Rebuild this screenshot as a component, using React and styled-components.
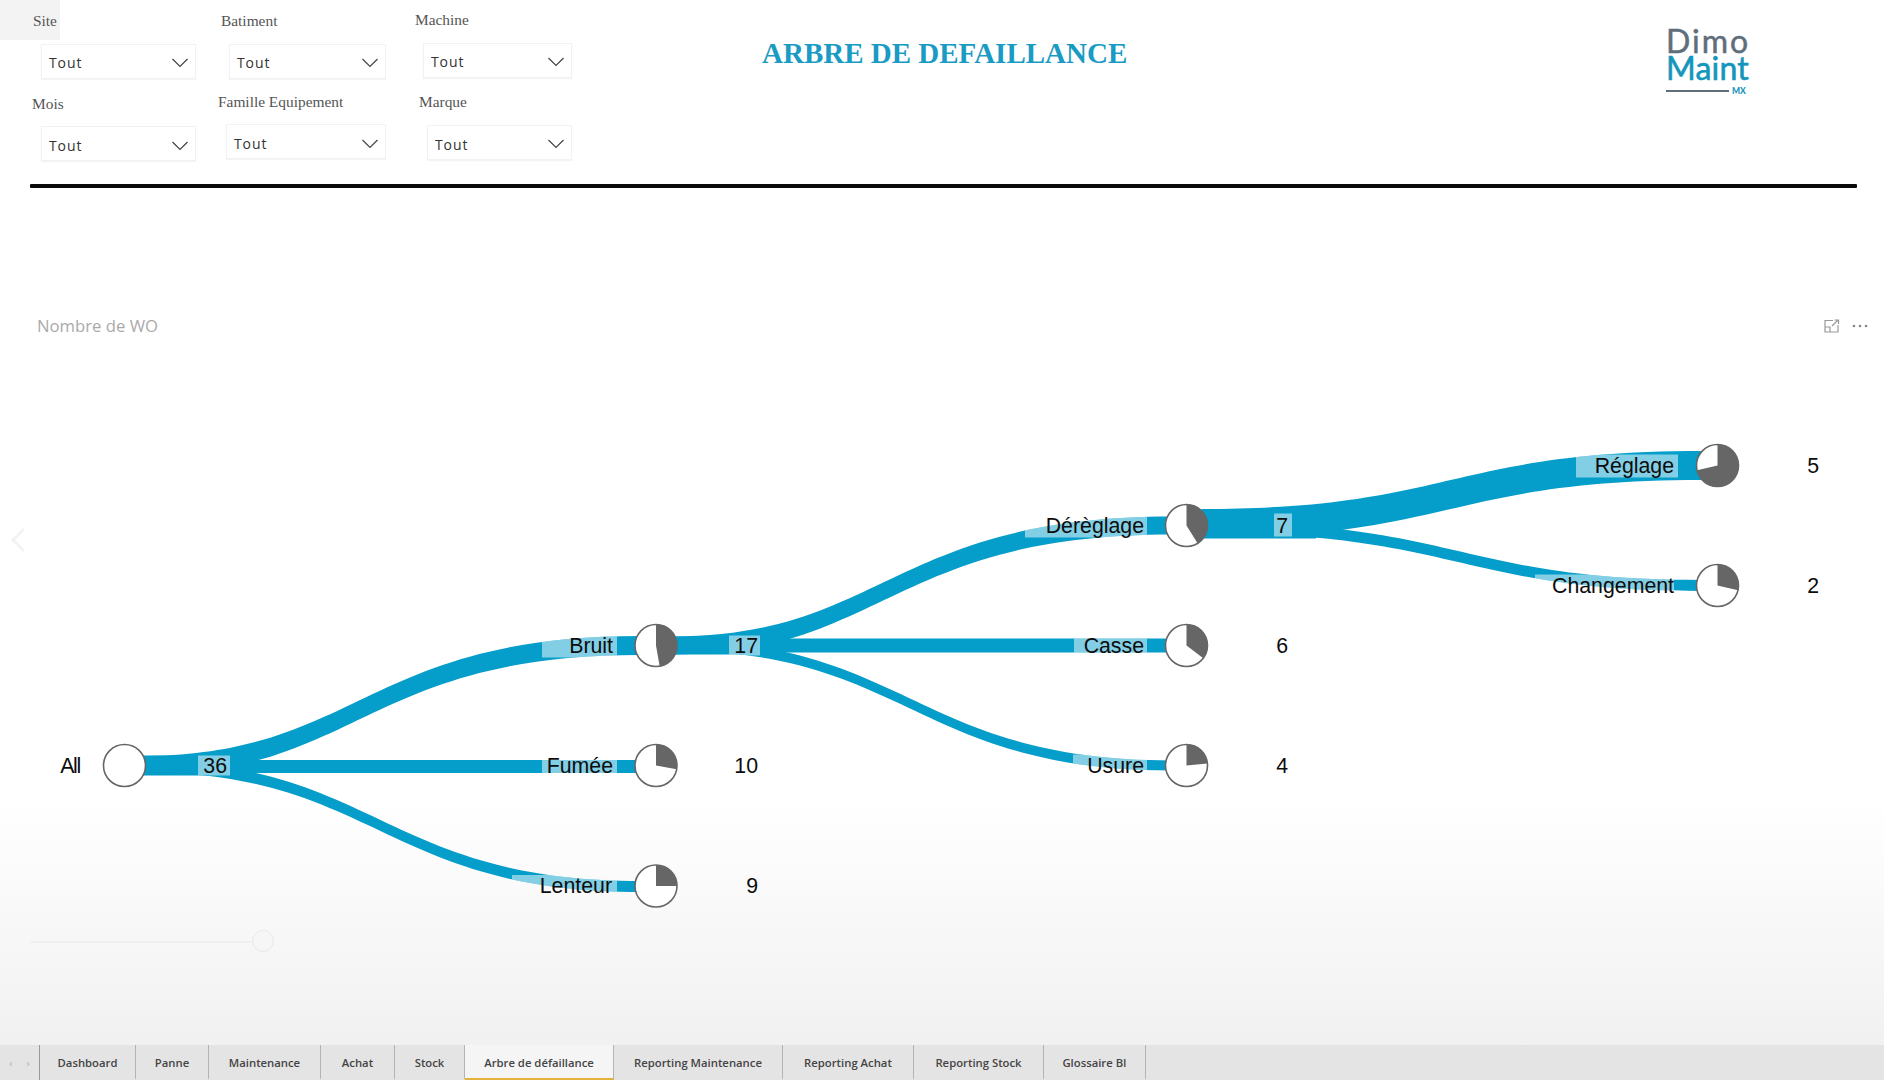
import React from "react";
import styled, { createGlobalStyle } from "styled-components";

const Global = createGlobalStyle`
  html, body { margin: 0; padding: 0; background: #fff; }
  body { font-family: "Open Sans", sans-serif; overflow: hidden; }
`;

const Page = styled.div`
  width: 1884px;
  height: 1080px;
  display: flex;
  flex-direction: column;
  background: linear-gradient(180deg, #fff 0, #fff 800px, #f1f1f1 1045px);
  overflow: hidden;
`;

const Header = styled.header`
  position: relative;
  height: 184px;
  display: flex;
  flex-shrink: 0;
  background: #fff;
  &::before {
    content: "";
    position: absolute;
    left: 0;
    top: 0;
    width: 60px;
    height: 40px;
    background: #f3f3f3;
  }
`;

const Filters = styled.div`
  position: relative;
  width: 740px;
  flex-shrink: 0;
`;

const FilterRow = styled.div`
  display: flex;
  align-items: flex-start;
  height: ${(p) => p.$height}px;
  padding-left: ${(p) => p.$left}px;
`;

const Filter = styled.div`
  width: ${(p) => p.$width}px;
  padding-top: ${(p) => p.$top}px;
  display: flex;
  flex-direction: column;
`;

const FilterLabel = styled.label`
  font-family: "Liberation Serif", serif;
  font-size: 15.4px;
  line-height: 16px;
  height: 16px;
  color: #555;
  white-space: nowrap;
  margin-bottom: ${(p) => p.$gap}px;
`;

const Select = styled.div`
  margin-left: ${(p) => p.$inset}px;
  width: ${(p) => p.$width}px;
  height: 35px;
  box-sizing: border-box;
  padding: ${(p) => p.$drop}px 6px 0 7px;
  display: flex;
  align-items: center;
  justify-content: space-between;
  border: 1px solid #f2f2f2;
  box-shadow: 0 1px 1px #f4f4f4;
  background: #fff;
  font-family: "Open Sans", sans-serif;
  font-size: 14px;
  letter-spacing: 0.9px;
  color: #333;
`;

const Chevron = () => (
  <svg width="18" height="10" viewBox="0 0 18 10" fill="none" stroke="#444" strokeWidth="1.2">
    <path d="M1.5 1 L9 8.5 L16.5 1" />
  </svg>
);

const Title = styled.h1`
  margin: 38px 0 0 22px;
  width: 365px;
  font-family: "Liberation Serif", serif;
  font-weight: 700;
  font-size: 29px;
  line-height: 30px;
  color: #1a9bc4;
  white-space: nowrap;
`;

const Logo = styled.div`
  margin: 27px 0 0 539px;
  width: 90px;
  display: flex;
  flex-direction: column;
  font-family: Lato, sans-serif;
  line-height: 27px;
  font-size: 32px;
`;

const LogoDimo = styled.span`
  color: #5f6e7b;
  letter-spacing: 2px;
  height: 27px;
  -webkit-text-stroke: 0.5px #5f6e7b;
`;
const LogoMaint = styled.span`
  color: #1396bc;
  height: 27px;
  letter-spacing: 0.2px;
  -webkit-text-stroke: 0.6px #1396bc;
`;
const LogoFoot = styled.div`
  display: flex;
  align-items: center;
  gap: 3px;
  margin-top: 6px;
`;
const LogoLine = styled.span`
  width: 63px;
  height: 1.5px;
  background: #5f6e7b;
`;
const LogoMx = styled.span`
  font-size: 8.5px;
  line-height: 8px;
  font-weight: 900;
  color: #1396bc;
`;

const Rule = styled.hr`
  margin: 0 27px 0 30px;
  height: 4px;
  flex-shrink: 0;
  border: 0;
  border-radius: 1px;
  background: #0a0a0a;
`;

const Panel = styled.main`
  position: relative;
  flex: 1;
  display: flex;
  flex-direction: column;
  min-height: 0;
`;

const PanelHead = styled.div`
  height: 34px;
  margin-top: 126px;
  padding: 0 16px 0 37px;
  display: flex;
  align-items: flex-start;
  justify-content: space-between;
`;

const PanelTitle = styled.div`
  font-family: "Open Sans", sans-serif;
  font-size: 16.7px;
  line-height: 24px;
  color: #aaa;
`;

const PanelIcons = styled.div`
  display: flex;
  align-items: center;
  gap: 12px;
  height: 24px;
`;

const Chart = styled.svg`
  display: block;
  flex: 1;
  width: 1884px;
  min-height: 0;
`;

const NodeText = styled.text`
  font-family: "Liberation Sans", sans-serif;
  font-size: 21.3px;
  letter-spacing: ${(p) => p.$tight || 0}px;
  fill: #0c0c0c;
  text-anchor: end;
  dominant-baseline: central;
`;

const Slider = styled.div`
  position: absolute;
  left: 30px;
  top: 753px;
  width: 233px;
  height: 2px;
  background: #f0f0f0;
  &::after {
    content: "";
    position: absolute;
    right: -11px;
    top: -11px;
    width: 22px;
    height: 22px;
    box-sizing: border-box;
    border-radius: 50%;
    border: 1px solid #e8e8e8;
    background: #f6f6f6;
  }
`;

const BackArrow = styled.svg`
  position: absolute;
  left: 10px;
  top: 339px;
`;

const TabBar = styled.nav`
  height: 35px;
  flex-shrink: 0;
  display: flex;
  background: #e4e4e4;
`;

const TabNav = styled.div`
  width: 40px;
  display: flex;
  align-items: center;
  justify-content: center;
  gap: 14px;
  box-sizing: border-box;
  border-right: 1px solid #999;
  font-size: 11px;
  color: #b5b5b5;
`;

const Tab = styled.div`
  width: ${(p) => p.$width}px;
  box-sizing: border-box;
  padding-top: 2px;
  display: flex;
  align-items: center;
  justify-content: center;
  border-right: 1px solid #b4b4b4;
  border-bottom: 2px solid ${(p) => (p.$active ? "#e3b23c" : "transparent")};
  background: ${(p) => (p.$active ? "#f5f5f5" : "transparent")};
  font-family: "Open Sans", sans-serif;
  font-size: 11.3px;
  font-weight: 600;
  color: #444;
  white-space: nowrap;
`;

const BAND = "#059dc9";
const GREY = "#666";

const band = (x0, y0, c1, c2, x1, y1, t) =>
  `M${x0} ${y0 - t / 2} C${c1} ${y0 - t / 2} ${c2} ${y1 - t / 2} ${x1} ${y1 - t / 2} L${x1} ${y1 + t / 2} C${c2} ${y1 + t / 2} ${c1} ${y0 + t / 2} ${x0} ${y0 + t / 2} Z`;

const stems = [
  { x: 124, y: 755, w: 125, h: 20 },
  { x: 656, y: 636, w: 112, h: 18 },
  { x: 1186, y: 509, w: 130, h: 29 },
];

const links = [
  [140, 765, 358, 365, 640, 645, 19],
  [140, 766, 300, 400, 640, 766, 13],
  [140, 766, 375, 385, 640, 886, 11],
  [672, 645, 882, 892, 1172, 525, 18],
  [672, 645, 800, 900, 1172, 645, 14],
  [672, 645, 907, 917, 1172, 765, 10],
  [1202, 523, 1450, 1450, 1702, 465, 29],
  [1202, 527, 1460, 1460, 1702, 585, 11],
];

const nodes = [
  { name: "All", x: 124.5, y: 765, share: 0, right: 80, tight: -1.3 },
  { name: "Bruit", x: 656, y: 645, share: 17 / 36, right: 613, box: [542, 75] },
  { name: "Fumée", x: 656, y: 765, share: 10 / 36, right: 613, box: [542, 75], value: 10, num: 758 },
  { name: "Lenteur", x: 656, y: 885.5, share: 9 / 36, right: 612, box: [512, 105], value: 9, num: 758 },
  { name: "Dérèglage", x: 1186.5, y: 525, share: 7 / 17, right: 1144, box: [1025, 122] },
  { name: "Casse", x: 1186.5, y: 645, share: 6 / 17, right: 1144, box: [1074, 73], value: 6, num: 1288 },
  { name: "Usure", x: 1186.5, y: 765, share: 4 / 17, right: 1144, box: [1073, 74], value: 4, num: 1288 },
  { name: "Réglage", x: 1717.5, y: 465, share: 5 / 7, right: 1674, box: [1576, 102], value: 5, num: 1819 },
  { name: "Changement", x: 1717.5, y: 585, share: 2 / 7, right: 1674, box: [1535, 139], value: 2, num: 1819 },
];

const totals = [
  { value: 36, right: 227, box: [198, 755, 32, 20], y: 765 },
  { value: 17, right: 758, box: [729, 635, 31, 20], y: 645 },
  { value: 7, right: 1288, box: [1274, 513, 18, 23], y: 525 },
];

const slicePath = (cx, cy, r, share) => {
  const a = share * 2 * Math.PI;
  const ex = cx + r * Math.sin(a);
  const ey = cy - r * Math.cos(a);
  return `M${cx} ${cy} L${cx} ${cy - r} A${r} ${r} 0 ${share > 0.5 ? 1 : 0} 1 ${ex} ${ey} Z`;
};

const tabs = [
  ["Dashboard", 96],
  ["Panne", 73],
  ["Maintenance", 112],
  ["Achat", 74],
  ["Stock", 70],
  ["Arbre de défaillance", 149],
  ["Reporting Maintenance", 169],
  ["Reporting Achat", 131],
  ["Reporting Stock", 130],
  ["Glossaire BI", 102],
];

const FilterBox = ({ label, width, top, gap, inset, select, drop }) => (
  <Filter $width={width} $top={top}>
    <FilterLabel $gap={gap}>{label}</FilterLabel>
    <Select $inset={inset} $width={select} $drop={drop}>
      Tout
      <Chevron />
    </Select>
  </Filter>
);

const Bands = () => (
  <>
    {stems.map((s) => (
      <rect key={s.x} x={s.x} y={s.y} width={s.w} height={s.h} />
    ))}
    {links.map((l, i) => (
      <path key={i} d={band(...l)} />
    ))}
  </>
);

export default function App() {
  return (
    <Page>
      <Global />
      <Header>
        <Filters>
          <FilterRow $height={92} $left={33}>
            <FilterBox label="Site" width={188} top={13} gap={15} inset={8} select={155} drop={2} />
            <FilterBox label="Batiment" width={194} top={13} gap={15} inset={8} select={157} drop={2} />
            <FilterBox label="Machine" width={165} top={12} gap={15} inset={8} select={149} drop={2} />
          </FilterRow>
          <FilterRow $height={92} $left={32}>
            <FilterBox label="Mois" width={186} top={4} gap={14} inset={9} select={155} drop={4} />
            <FilterBox label="Famille Equipement" width={201} top={2} gap={14} inset={8} select={160} drop={4} />
            <FilterBox label="Marque" width={160} top={2} gap={15} inset={8} select={145} drop={3} />
          </FilterRow>
        </Filters>
        <Title>ARBRE DE DEFAILLANCE</Title>
        <Logo>
          <LogoDimo>Dimo</LogoDimo>
          <LogoMaint>Maint</LogoMaint>
          <LogoFoot>
            <LogoLine />
            <LogoMx>MX</LogoMx>
          </LogoFoot>
        </Logo>
      </Header>
      <Rule />
      <Panel>
        <PanelHead>
          <PanelTitle>Nombre de WO</PanelTitle>
          <PanelIcons>
            <svg width="16" height="14" viewBox="0 0 16 14" fill="none" stroke="#999" strokeWidth="1.2">
              <path d="M9 1.5 H1 V13 H14 V6" />
              <path d="M1 8 H6 V13" />
              <path d="M8 7 L14 1 M10.5 1 H14.5 V5" />
            </svg>
            <svg width="16" height="4" viewBox="0 0 16 4" fill="#888">
              <circle cx="2" cy="2" r="1.3" />
              <circle cx="8" cy="2" r="1.3" />
              <circle cx="14" cy="2" r="1.3" />
            </svg>
          </PanelIcons>
        </PanelHead>
        <Chart viewBox="0 347.5 1884 697" preserveAspectRatio="xMinYMin meet">
          <defs>
            <clipPath id="band-area">
              <Bands />
            </clipPath>
          </defs>
          <g fill={BAND}>
            <Bands />
          </g>
          <g clipPath="url(#band-area)" fill="#fff" fillOpacity="0.5">
            {nodes.filter((n) => n.box).map((n) => (
              <rect key={n.name} x={n.box[0]} y={n.y - 11} width={n.box[1]} height={23} />
            ))}
            {totals.map((t) => (
              <rect key={t.value} x={t.box[0]} y={t.box[1]} width={t.box[2]} height={t.box[3]} />
            ))}
          </g>
          {nodes.map((n) => (
            <g key={n.name}>
              <circle cx={n.x} cy={n.y} r="21" fill="#fff" stroke={GREY} strokeWidth="1.6" />
              {n.share > 0 && <path d={slicePath(n.x, n.y, 21, n.share)} fill={GREY} />}
              <NodeText x={n.right} y={n.y} $tight={n.tight}>{n.name}</NodeText>
              {n.value !== undefined && <NodeText x={n.num} y={n.y}>{n.value}</NodeText>}
            </g>
          ))}
          {totals.map((t) => (
            <NodeText key={t.value} x={t.right} y={t.y}>{t.value}</NodeText>
          ))}
        </Chart>
        <BackArrow width="16" height="26" viewBox="0 0 16 26" fill="none" stroke="#f3f3f3" strokeWidth="3">
          <path d="M14 2 L3 13 L14 24" />
        </BackArrow>
        <Slider />
      </Panel>
      <TabBar>
        <TabNav>
          <span>‹</span>
          <span>›</span>
        </TabNav>
        {tabs.map(([name, width]) => (
          <Tab key={name} $width={width} $active={name === "Arbre de défaillance"}>
            {name}
          </Tab>
        ))}
      </TabBar>
    </Page>
  );
}
